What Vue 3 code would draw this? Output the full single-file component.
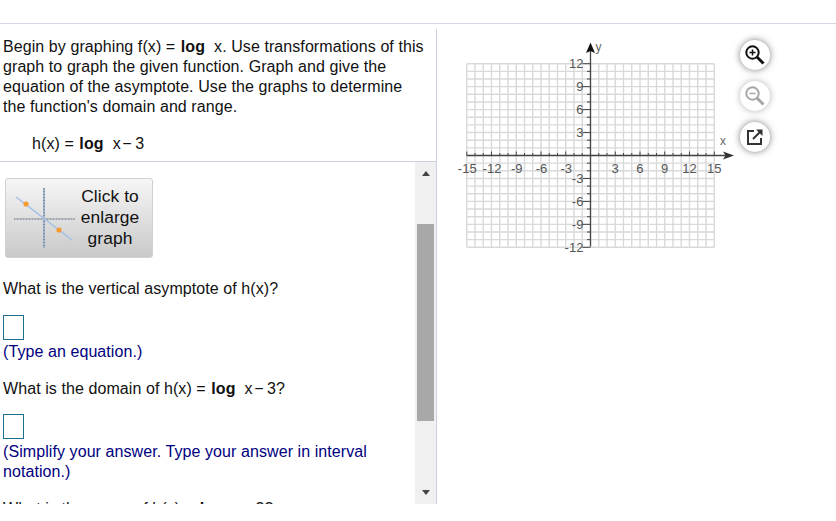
<script setup>
const xs = Array.from({ length: 31 }, (_, i) => i - 15)
const ys = Array.from({ length: 25 }, (_, i) => i - 12)
const px = (v) => 590.5 + v * 8.25
const py = (v) => 154.5 - v * 7.65
const xLabels = [-15, -12, -9, -6, -3, 3, 6, 9, 12, 15]
const yLabels = [12, 9, 6, 3, -3, -6, -9, -12]
</script>

<template>
  <div class="page">
    <div class="topbar"></div>
    <div class="main">
      <div class="left">
        <div class="prompt">
          <p class="intro">Begin by graphing f(x) = <b>log</b>&nbsp; x. Use transformations of this graph to graph the given function. Graph and give the equation of the asymptote. Use the graphs to determine the function's domain and range.</p>
          <p class="func">h(x) = <b>log</b>&nbsp; x<span class="minus">−</span>3</p>
        </div>
        <div class="scrollbox">
          <div class="content">
            <button class="enlarge">
              <svg width="66" height="62" viewBox="0 0 66 62" class="thumb">
                <path d="M32 0V60" stroke="#a3b3c9" stroke-width="2" />
                <path d="M32 0V60" stroke="#7f8fa8" stroke-width="2" stroke-dasharray="1 2" />
                <path d="M2 31H63" stroke="#b9bec6" stroke-width="2" />
                <path d="M2 31H63" stroke="#9aa0aa" stroke-width="2" stroke-dasharray="1 2" />
                <path d="M4 9L60 52" stroke="#9fbfe6" stroke-width="1.5" />
                <circle cx="14" cy="16" r="2.6" fill="#f79a2e" />
                <circle cx="47" cy="42" r="2.6" fill="#f79a2e" />
              </svg>
              <span class="enlarge-text">Click to<br />enlarge<br />graph</span>
            </button>
            <p class="q q1">What is the vertical asymptote of h(x)?</p>
            <div class="answer a1"></div>
            <p class="hint">(Type an equation.)</p>
            <p class="q q2">What is the domain of h(x) = <b>log</b>&nbsp; x<span class="minus">−</span>3?</p>
            <div class="answer a2"></div>
            <p class="hint h2">(Simplify your answer. Type your answer in interval notation.)</p>
            <p class="q q3">What is the range of h(x) = <b>log</b>&nbsp; x<span class="minus">−</span>3?</p>
          </div>
          <div class="scrollbar">
            <span class="arrow up"></span>
            <div class="track"><div class="bar"></div></div>
            <span class="arrow down"></span>
          </div>
        </div>
      </div>
      <div class="right">
        <svg class="graph" width="300" height="240" viewBox="440 28 300 240">
          <g stroke="#d9d9d9" stroke-width="1.4">
            <path v-for="x in xs" :key="'gx' + x" :d="`M${px(x)} ${py(12)}V${py(-12)}`" />
            <path v-for="y in ys" :key="'gy' + y" :d="`M${px(-15)} ${py(y)}H${px(15)}`" />
          </g>
          <g stroke="#444" stroke-width="1">
            <path :d="`M${px(-15)} 154.5H728`" stroke-width="1.3" />
            <path :d="`M590.5 245.5V50`" stroke-width="1.3" />
            <path v-for="x in xs" :key="'tx' + x" :d="`M${px(x)} ${x % 3 === 0 ? 150.5 : 152}V154.5`" />
            <path v-for="y in ys" :key="'ty' + y" :d="`M${y % 3 === 0 ? 582.5 : 587} ${py(y)}H590.5`" />
          </g>
          <path d="M734 154.5L723 150.5L725.5 154.5L723 158.5Z" fill="#333" />
          <path d="M590.5 41.5L586 52L590.5 50L595 52Z" fill="#111" />
          <g class="lbl" text-anchor="middle">
            <text v-for="x in xLabels" :key="'lx' + x" :x="px(x) + (x < 0 ? 0.5 : 0)" y="171.5">{{ x < 0 ? '-' + -x : x }}</text>
          </g>
          <g class="lbl" text-anchor="end">
            <text v-for="y in yLabels" :key="'ly' + y" x="583.5" :y="py(y) + 4.5">{{ y < 0 ? '-' + -y : y }}</text>
          </g>
          <text class="axis" x="595.5" y="50">y</text>
          <text class="axis" x="720" y="144">x</text>
        </svg>
        <div class="tools">
          <button class="tool">
            <svg width="22" height="22" viewBox="0 0 22 22" fill="none" stroke="#111">
              <circle cx="8.5" cy="8.5" r="6.2" stroke-width="2" />
              <path d="M13 13L19.5 19.5" stroke-width="3" />
              <path d="M5.5 8.5H11.5M8.5 5.5V11.5" stroke-width="1.5" />
            </svg>
          </button>
          <button class="tool light">
            <svg width="22" height="22" viewBox="0 0 22 22" fill="none" stroke="#a6a6a6">
              <circle cx="8.5" cy="8.5" r="6.2" stroke-width="2" />
              <path d="M13 13L19.5 19.5" stroke-width="3" />
              <path d="M5.5 8.5H11.5" stroke-width="1.5" />
            </svg>
          </button>
          <button class="tool">
            <svg width="20" height="20" viewBox="0 0 20 20" fill="none" stroke="#333">
              <path d="M9 4H3V17H16V11" stroke-width="2" />
              <path d="M8 12L15 5" stroke-width="2" />
              <path d="M11 2.5H17.5V9Z" fill="#333" stroke="none" />
            </svg>
          </button>
        </div>
      </div>
    </div>
  </div>
</template>

<style>
html, body { margin: 0; background: #fff; overflow: hidden; }
</style>

<style scoped>
.page { width: 836px; height: 521px; font-family: "Liberation Sans", Arial, sans-serif; color: #111; font-size: 16px; letter-spacing: .08px; position: relative; overflow: hidden; }
.topbar { height: 23px; border-bottom: 1px solid #d3d7e3; margin-bottom: 5px; }
.main { display: flex; height: 475px; }
.left { width: 436px; flex: none; border-right: 1px solid #ccd3e0; display: flex; flex-direction: column; }
p { margin: 0; }
b { margin-left: 1px; }
.minus { margin: 0 3.5px 0 1.5px; }
.prompt { height: 124px; border-bottom: 1px solid #ccd3e0; padding: 8px 0 0 3px; line-height: 20px; }
.intro { width: 422px; }
.func { margin: 17px 0 0 29px; }
.scrollbox { flex: 1; min-height: 0; display: flex; overflow: hidden; }
.content { width: 415px; flex: none; padding: 16px 0 0 3px; box-sizing: border-box; }
.enlarge { display: flex; align-items: center; width: 148px; height: 80px; margin-left: 2px; padding: 0 0 0 6px; border: 1px solid #d0d0d0; border-radius: 3px; background: linear-gradient(#f6f6f6, #c9c9c9); font: inherit; letter-spacing: inherit; color: #111; box-sizing: border-box; }
.thumb { flex: none; margin-top: 1px; }
.enlarge-text { font-size: 17.4px; line-height: 21px; width: 64px; text-align: center; margin-top: -2px; white-space: nowrap; }
.q { line-height: 20px; }
.q1 { margin-top: 21px; }
.answer { width: 21px; height: 25px; border: 1px solid #1c6f8e; box-sizing: border-box; }
.a1 { margin-top: 16px; }
.a2 { margin-top: 15px; }
.hint { color: #000080; line-height: 20px; margin-top: 2px; }
.hint.h2 { margin-top: 3px; }
.q2 { margin-top: 17px; }
.q3 { margin-top: 17px; }
.scrollbar { width: 21px; flex: none; background: #f0f0f0; display: flex; flex-direction: column; align-items: center; }
.arrow { width: 0; height: 0; border-left: 4.5px solid transparent; border-right: 4.5px solid transparent; flex: none; }
.up { border-bottom: 5px solid #444; margin-top: 9px; }
.down { border-top: 5px solid #444; margin-bottom: 9px; }
.track { flex: 1; width: 100%; padding-top: 48px; box-sizing: border-box; display: flex; justify-content: center; }
.bar { width: 17px; height: 197px; background: #a8a8a8; }
.right { position: relative; flex: 1; }
.graph { position: absolute; left: 3px; top: 0; }
.lbl { font: 13px "Liberation Sans", Arial, sans-serif; fill: #555; }
.axis { font: 12px "Liberation Sans", Arial, sans-serif; fill: #666; }
.tools { position: absolute; left: 303px; top: 11px; display: flex; flex-direction: column; gap: 11px; }
.tool { width: 30px; height: 30px; padding: 0; border: none; border-radius: 50%; background: #fff; box-shadow: 0 0 7px rgba(0,0,0,.5); display: flex; align-items: center; justify-content: center; }
.tool.light { box-shadow: 0 0 7px rgba(0,0,0,.3); }
</style>
